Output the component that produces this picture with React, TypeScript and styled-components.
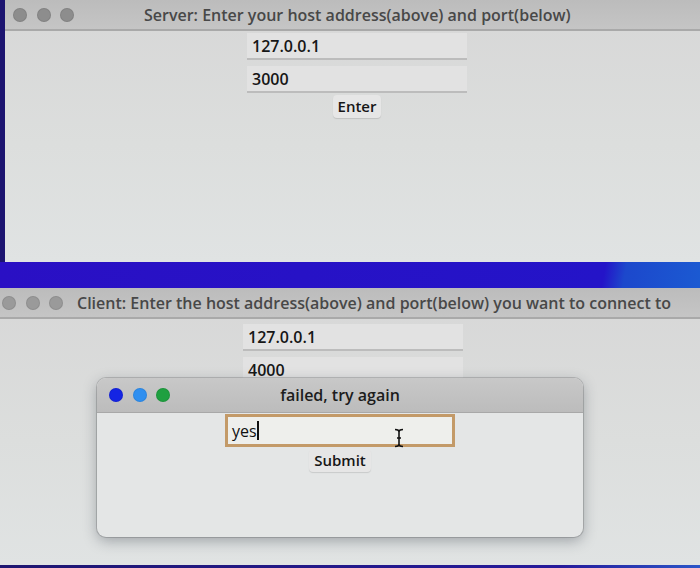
import React from 'react';
import styled, { createGlobalStyle } from 'styled-components';

const GlobalStyle = createGlobalStyle`
    html, body {
        margin: 0;
        padding: 0;
        width: 700px;
        height: 568px;
        overflow: hidden;
        background: #1c1470;
    }
    body {
        font-family: "Open Sans", "Noto Sans", "Liberation Sans", sans-serif;
    }
`;

const Screen = styled.div`
    width: 700px;
    height: 568px;
    display: flex;
    flex-direction: column;
    position: relative;
    background: #1c1470;
`;

const Window = styled.div<{ $inset: number; $height: number }>`
    margin-left: ${p => p.$inset}px;
    height: ${p => p.$height}px;
    display: flex;
    flex-direction: column;
    background: linear-gradient(180deg, #d7d7d7 0%, #dcdedd 55%, #e0e3e3 100%);
    position: relative;
`;

const TitleBar = styled.div<{ $pad: number }>`
    height: 29px;
    flex: none;
    display: flex;
    align-items: center;
    padding-left: ${p => p.$pad}px;
    background: linear-gradient(180deg, #bcbcbc, #c5c5c5);
    border-bottom: 2px solid #a9a9a9;
    color: #484848;
    font-size: 16px;
    font-weight: 600;
`;

const Lights = styled.div`
    display: flex;
    gap: 9.5px;
    flex: none;
`;

const Light = styled.span<{ $color: string }>`
    width: 14px;
    height: 14px;
    border-radius: 50%;
    background: ${p => p.$color};
    box-shadow: inset 0 0 0 1px rgba(0, 0, 0, 0.08);
`;

const Title = styled.div<{ $gap: number }>`
    margin-left: ${p => p.$gap}px;
    white-space: nowrap;
`;

const Form = styled.div<{ $left: number; $top: number }>`
    display: flex;
    flex-direction: column;
    width: 220px;
    margin-left: ${p => p.$left}px;
    padding-top: ${p => p.$top}px;
    gap: 6px;
`;

const Field = styled.div`
    height: 25px;
    display: flex;
    align-items: center;
    padding-left: 5px;
    background: #e2e2e2;
    border-bottom: 2px solid #bcbcbc;
    color: #161616;
    font-size: 16px;
    font-weight: 600;
`;

const Button = styled.div<{ $shift?: number }>`
    align-self: center;
    margin-top: ${p => p.$shift ?? 0}px;
    padding: 1px 5px 2px;
    border-radius: 4px;
    background: #e6e6e6;
    box-shadow: 0 1px 1px rgba(0, 0, 0, 0.12);
    color: #161616;
    font-size: 15px;
    font-weight: 600;
`;

const DesktopStrip = styled.div`
    height: 26px;
    flex: none;
    background: linear-gradient(100deg, #2a10c4 0%, #2414c8 86%, #1c48cc 89%, #1b5ad2 100%);
`;

const BottomStrip = styled.div`
    flex: 1;
    background: linear-gradient(90deg, #1e1670, #251a9a 80%, #2b56c8);
`;

const Dialog = styled.div`
    position: absolute;
    left: 97px;
    top: 378px;
    width: 486px;
    height: 159px;
    border-radius: 9px;
    overflow: hidden;
    display: flex;
    flex-direction: column;
    background: #e4e6e6;
    box-shadow: 0 4px 14px rgba(40, 50, 60, 0.35), 0 0 0 1px rgba(120, 120, 120, 0.35);
`;

const DialogBar = styled.div`
    height: 34px;
    flex: none;
    display: flex;
    align-items: center;
    padding-left: 12px;
    background: linear-gradient(180deg, #c8c8c8, #bcbcbc);
    border-bottom: 1px solid #a8a8a8;
    color: #1c1c1c;
    font-size: 16px;
    font-weight: 600;
    position: relative;
`;

const DialogTitle = styled.div`
    position: absolute;
    left: 0;
    right: 0;
    text-align: center;
    pointer-events: none;
`;

const DialogBody = styled.div`
    display: flex;
    flex-direction: column;
    align-items: center;
    padding-top: 1px;
    gap: 2px;
`;

const Input = styled.div`
    width: 220px;
    height: 27px;
    display: flex;
    align-items: center;
    padding-left: 4px;
    background: #eeefec;
    border: 3px solid #c39a68;
    color: #111;
    font-size: 16px;
    font-weight: 500;
    position: relative;
`;

const Caret = styled.span`
    display: inline-block;
    width: 1.5px;
    height: 19px;
    margin-left: 0.5px;
    background: #111;
`;

const IBeam = styled.svg`
    position: absolute;
    left: 166px;
    top: 11px;
`;

const App: React.FC = () => {
    return (
        <Screen>
            <GlobalStyle />

            <Window $inset={5} $height={262}>
                <TitleBar $pad={8}>
                    <Lights>
                        <Light $color="#8d8d8d" />
                        <Light $color="#8d8d8d" />
                        <Light $color="#8d8d8d" />
                    </Lights>
                    <Title $gap={70}>Server: Enter your host address(above) and port(below)</Title>
                </TitleBar>
                <Form $left={242} $top={2}>
                    <Field>127.0.0.1</Field>
                    <Field>3000</Field>
                    <Button $shift={-4}>Enter</Button>
                </Form>
            </Window>

            <DesktopStrip />

            <Window $inset={0} $height={277}>
                <TitleBar $pad={2}>
                    <Lights>
                        <Light $color="#9a9a9a" />
                        <Light $color="#9a9a9a" />
                        <Light $color="#9a9a9a" />
                    </Lights>
                    <Title $gap={14}>Client: Enter the host address(above) and port(below) you want to connect to</Title>
                </TitleBar>
                <Form $left={243} $top={5}>
                    <Field>127.0.0.1</Field>
                    <Field>4000</Field>
                </Form>
            </Window>

            <BottomStrip />

            <Dialog>
                <DialogBar>
                    <Lights>
                        <Light $color="#1424e4" />
                        <Light $color="#2f8ff0" />
                        <Light $color="#1fa040" />
                    </Lights>
                    <DialogTitle>failed, try again</DialogTitle>
                </DialogBar>
                <DialogBody>
                    <Input>
                        yes<Caret />
                        <IBeam width="10" height="20" viewBox="0 0 10 20">
                            <path d="M1 1.5 Q5 1.5 5 4 Q5 1.5 9 1.5 M5 4 V16 M1 18.5 Q5 18.5 5 16 Q5 18.5 9 18.5 M3 10 H7"
                                fill="none" stroke="#111" strokeWidth="1.6" />
                        </IBeam>
                    </Input>
                    <Button>Submit</Button>
                </DialogBody>
            </Dialog>
        </Screen>
    );
};

export default App;
